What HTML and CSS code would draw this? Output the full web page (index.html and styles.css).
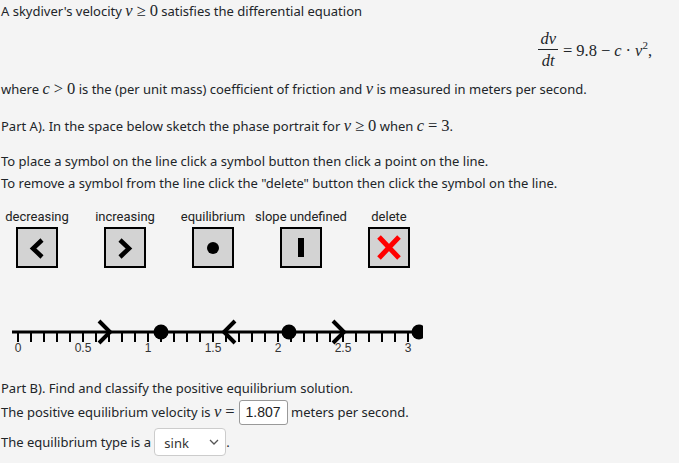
FILE: index.html
```html
<!DOCTYPE html>
<html>
<head>
<meta charset="utf-8">
<link rel="stylesheet" href="styles.css">
</head>
<body>
<div class="page">
  <p class="line">A skydiver's velocity <span class="mi">v</span><span class="mo">≥</span><span class="mn">0</span> satisfies the differential equation</p>
  <div class="display">
    <span class="frac"><span class="num"><span class="mi">dv</span></span><span class="den"><span class="mi">dt</span></span></span>
    <span class="rhs"><span class="mo eqs">=</span><span class="mn">9.8</span><span class="mo">−</span><span class="mi">c</span><span class="mo">·</span><span class="mi">v</span><sup class="sup">2</sup><span class="mn">,</span></span>
  </div>
  <p class="line">where <span class="mi">c</span><span class="mo">&gt;</span><span class="mn">0</span> is the (per unit mass) coefficient of friction and <span class="mi">v</span> is measured in meters per second.</p>
  <p class="line parta">Part A). In the space below sketch the phase portrait for <span class="mi">v</span><span class="mo">≥</span><span class="mn">0</span> when <span class="mi">c</span><span class="mo">=</span><span class="mn">3</span>.</p>
  <p class="line instr">To place a symbol on the line click a symbol button then click a point on the line.<br>To remove a symbol from the line click the "delete" button then click the symbol on the line.</p>

  <div class="tools">
    <div class="tool"><div class="tlabel">decreasing</div><div class="tbtn"><svg width="38" height="37" viewBox="0 0 38 37"><polyline points="24,11 15,19.5 24,28" fill="none" stroke="#000" stroke-width="4.5"/></svg></div></div>
    <div class="tool"><div class="tlabel">increasing</div><div class="tbtn"><svg width="38" height="37" viewBox="0 0 38 37"><polyline points="14,11 23,19.5 14,28" fill="none" stroke="#000" stroke-width="4.5"/></svg></div></div>
    <div class="tool"><div class="tlabel">equilibrium</div><div class="tbtn"><svg width="38" height="37" viewBox="0 0 38 37"><circle cx="19" cy="19" r="6" fill="#000"/></svg></div></div>
    <div class="tool"><div class="tlabel">slope undefined</div><div class="tbtn"><svg width="38" height="37" viewBox="0 0 38 37"><rect x="16" y="9" width="6" height="19" fill="#000"/></svg></div></div>
    <div class="tool"><div class="tlabel">delete</div><div class="tbtn"><svg width="38" height="37" viewBox="0 0 38 37"><path d="M9,8 L29,29 M29,8 L9,29" stroke="#ff0000" stroke-width="5"/></svg></div></div>
  </div>

  <svg class="numline" width="422" height="62" viewBox="0 0 422 62">
    <line x1="11" y1="17" x2="422" y2="17" stroke="#000" stroke-width="3"/>
    <g id="ticks" stroke="#000" stroke-width="2"></g>
    <g fill="#333" font-family="'Liberation Sans', Arial, sans-serif" font-size="12" text-anchor="middle">
      <text x="17" y="37">0</text>
      <text x="82" y="37">0.5</text>
      <text x="147" y="37">1</text>
      <text x="212" y="37">1.5</text>
      <text x="277" y="37">2</text>
      <text x="342" y="37">2.5</text>
      <text x="407" y="37">3</text>
    </g>
    <polyline points="98,6 109,17 98,28" fill="none" stroke="#000" stroke-width="4"/>
    <circle cx="160" cy="17" r="7.5" fill="#000"/>
    <polyline points="234,6 223,17 234,28" fill="none" stroke="#000" stroke-width="4"/>
    <circle cx="288" cy="17" r="7.5" fill="#000"/>
    <polyline points="332,6 343,17 332,28" fill="none" stroke="#000" stroke-width="4"/>
    <circle cx="418" cy="17" r="7.5" fill="#000"/>
  </svg>

  <p class="line partb">Part B). Find and classify the positive equilibrium solution.</p>
  <div class="row r1">The positive equilibrium velocity is&nbsp;<span class="mi">v</span><span class="mo">=</span><span class="answer">1.807</span>&nbsp;meters per second.</div>
  <div class="row r2">The equilibrium type is a&nbsp;<span class="select"><span>sink</span><svg width="10" height="6" viewBox="0 0 10 6"><polyline points="1,1 5,5 9,1" fill="none" stroke="#555" stroke-width="1.3"/></svg></span>.</div>
</div>
<script src="script.js"></script>
</body>
</html>
```

FILE: script.js
```js
(function(){
  var g = document.getElementById('ticks');
  var ns = 'http://www.w3.org/2000/svg';
  for (var i = 0; i <= 30; i++) {
    var x = 17 + i * 13;
    var l = document.createElementNS(ns, 'line');
    l.setAttribute('x1', x); l.setAttribute('x2', x);
    l.setAttribute('y1', 17); l.setAttribute('y2', 27);
    g.appendChild(l);
  }
})();
```

FILE: styles.css
```css
html, body {
  margin: 0;
  padding: 0;
  background: #f4f4f4;
}
.page {
  font-family: "Noto Sans", "Open Sans", sans-serif;
  font-size: 13px;
  color: #212529;
  padding: 0 0 0 1px;
}
.line {
  margin: 0;
  line-height: 22px;
}
.mi {
  font-family: "Liberation Serif", "DejaVu Serif", serif;
  font-style: italic;
  font-size: 16.5px;
}
.mo, .mn {
  font-family: "Liberation Serif", "DejaVu Serif", serif;
  font-size: 16.5px;
}
.mo { margin: 0 4px; }
.display {
  height: 56px;
  display: flex;
  align-items: center;
  justify-content: flex-end;
  padding-right: 27px;
  padding-bottom: 2px;
  box-sizing: border-box;
}
.frac {
  display: inline-flex;
  flex-direction: column;
  align-items: center;
  margin-right: 1px;
  padding-top: 2px;
}
.frac .num {
  border-bottom: 1px solid #212529;
  padding: 0 2px 1px;
  line-height: 17px;
}
.frac .den {
  line-height: 17px;
  padding-top: 2px;
}
.rhs { white-space: nowrap; padding-top: 3px; }
.display .mo { margin: 0 4px; }
.display .eqs { margin-left: 4px; }
.sup {
  font-family: "Liberation Serif", serif;
  font-size: 11px;
  vertical-align: 7px;
  line-height: 0;
}
.parta { margin-top: 15px; }
.instr { margin-top: 13px; }
.tools {
  display: grid;
  grid-template-columns: repeat(5, 72px);
  column-gap: 16px;
  margin-top: 15px;
  font-family: Roboto, "Liberation Sans", sans-serif;
  font-size: 13px;
  color: #222;
}
.tool {
  display: flex;
  flex-direction: column;
  align-items: center;
}
.tlabel {
  white-space: nowrap;
  line-height: 16px;
  height: 18px;
}
.tbtn {
  width: 38px;
  height: 37px;
  border: 2px solid #000;
  background: #d3d3d3;
  display: flex;
}
.numline {
  display: block;
  margin-top: 47px;
}
.partb { margin-top: 0; }
.row {
  display: flex;
  align-items: center;
  line-height: 22px;
}
.r1 { height: 26px; }
.r2 { height: 30px; margin-top: 2px; }
.answer {
  font-family: "Liberation Sans", Arial, sans-serif;
  font-size: 14px;
  color: #222;
  border: 1px solid #999;
  border-radius: 3px;
  background: #fff;
  height: 23px;
  line-height: 23px;
  padding: 0 6px;
  margin-left: 0;
}
.select {
  display: inline-flex;
  align-items: center;
  justify-content: space-between;
  width: 55px;
  height: 26px;
  padding: 0 6px 0 9px;
  border: 1px solid #ccc;
  border-radius: 4px;
  background: #fff;
  color: #333;
  margin-left: 0;
}
.select span { padding-top: 2px; }
```
